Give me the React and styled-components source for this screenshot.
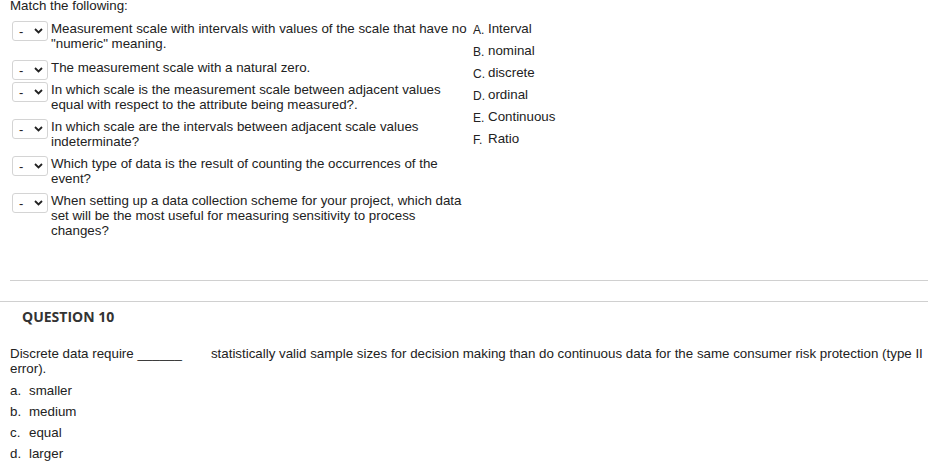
import React from "react";
import styled, { createGlobalStyle } from "styled-components";

const Global = createGlobalStyle`
  html, body { margin: 0; padding: 0; background: #fff; overflow: hidden; }
  body { font-family: "Liberation Sans", Arial, sans-serif; font-size: 13.33px; color: #222; }
`;

const Page = styled.div`
  width: 928px;
  height: 462px;
  overflow: hidden;
`;

const Title = styled.div`
  margin: -2px 0 0 10px;
  line-height: 15px;
`;

const Match = styled.div`
  display: flex;
  margin-top: 8px;
  padding-left: 12px;
`;

const Questions = styled.div`
  display: flex;
  flex-direction: column;
  gap: 7px;
  width: 460px;
`;

const Row = styled.div`
  display: flex;
  align-items: flex-start;
  gap: 3px;
  margin-bottom: ${(p) => (p.$first ? 2 : 0)}px;
`;

const SelectBox = styled.div`
  flex: none;
  box-sizing: border-box;
  width: 36px;
  height: 20px;
  margin-bottom: -5px;
  border: 1px solid #d4d4d4;
  border-radius: 3px;
  display: flex;
  align-items: center;
  justify-content: space-between;
  padding: 0 4px 0 6px;
  font-size: 13px;
  color: #222;
  background: #fff;
`;

const Prompt = styled.div`
  width: 420px;
  line-height: 15px;
`;

const Answers = styled.div`
  display: flex;
  flex-direction: column;
  gap: 7px;
  margin-left: 1px;
`;

const Answer = styled.div`
  display: flex;
  line-height: 15px;
`;

const Letter = styled.span`
  width: 15px;
  font-size: 12px;
  position: relative;
  top: 2px;
`;

const Divider = styled.hr`
  border: 0;
  border-top: 1px solid #d0d0d0;
  margin: ${(p) => p.$top}px 0 0 ${(p) => p.$left}px;
  height: 0;
`;

const QHeading = styled.h3`
  margin: 7px 0 0 22px;
  font-family: "Open Sans", sans-serif;
  font-weight: 700;
  font-size: 14px;
  line-height: 16px;
  color: #333;
`;

const QText = styled.p`
  margin: 21px 0 0 10px;
  width: 940px;
  line-height: 15px;
`;

const Gap = styled.span`
  display: inline-block;
  width: 29px;
`;

const Options = styled.ol`
  list-style: none;
  margin: 7px 0 0 10px;
  padding: 0;
  display: flex;
  flex-direction: column;
  gap: 6px;
`;

const Option = styled.li`
  display: flex;
  line-height: 15px;
`;

const OptLetter = styled.span`
  width: 19px;
`;

const Chevron = () => (
  <svg width="9" height="6" viewBox="0 0 9 6">
    <path d="M1 1 L4.5 4.5 L8 1" fill="none" stroke="#222" strokeWidth="1.8" />
  </svg>
);

const prompts = [
  'Measurement scale with intervals with values of the scale that have no "numeric" meaning.',
  "The measurement scale with a natural zero.",
  "In which scale is the measurement scale between adjacent values equal with respect to the attribute being measured?.",
  "In which scale are the intervals between adjacent scale values indeterminate?",
  "Which type of data is the result of counting the occurrences of the event?",
  "When setting up a data collection scheme for your project, which data set will be the most useful for measuring sensitivity to process changes?",
];

const answers = [
  ["A.", "Interval"],
  ["B.", "nominal"],
  ["C.", "discrete"],
  ["D.", "ordinal"],
  ["E.", "Continuous"],
  ["F.", "Ratio"],
];

const options = [
  ["a.", "smaller"],
  ["b.", "medium"],
  ["c.", "equal"],
  ["d.", "larger"],
];

export default function App() {
  return (
    <Page>
      <Global />
      <Title>Match the following:</Title>
      <Match>
        <Questions>
          {prompts.map((p, i) => (
            <Row key={i} $first={i === 0}>
              <SelectBox>
                <span>-</span>
                <Chevron />
              </SelectBox>
              <Prompt>{p}</Prompt>
            </Row>
          ))}
        </Questions>
        <Answers>
          {answers.map(([l, t]) => (
            <Answer key={l}>
              <Letter>{l}</Letter>
              <span>{t}</span>
            </Answer>
          ))}
        </Answers>
      </Match>
      <Divider $top={42} $left={10} />
      <Divider $top={20} $left={0} />
      <QHeading>QUESTION 10</QHeading>
      <QText>
        Discrete data require ______<Gap />statistically valid sample sizes for decision making than do
        continuous data for the same consumer risk protection (type II error).
      </QText>
      <Options>
        {options.map(([l, t]) => (
          <Option key={l}>
            <OptLetter>{l}</OptLetter>
            <span>{t}</span>
          </Option>
        ))}
      </Options>
    </Page>
  );
}
